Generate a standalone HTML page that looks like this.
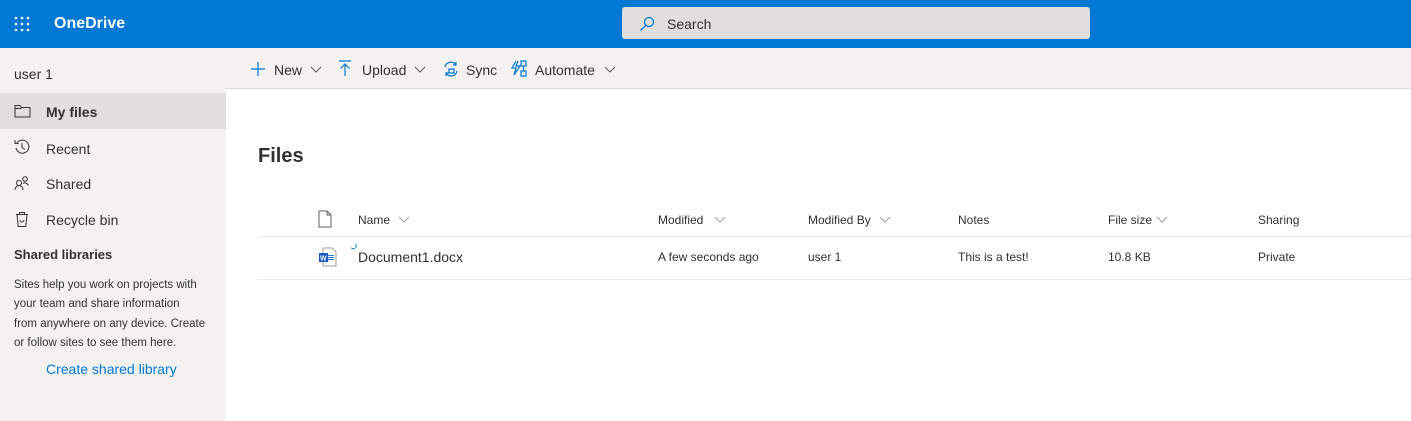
<!DOCTYPE html>
<html><head><meta charset="utf-8"><style>
*{margin:0;padding:0;box-sizing:border-box}
body{width:1411px;height:421px;overflow:hidden;font-family:"Liberation Sans",sans-serif;background:#faf9f8;position:relative;color:#323130}
.top{position:absolute;left:0;top:0;width:1411px;height:48px;background:#0078d4}
.brand{position:absolute;left:54px;top:15px;color:#fff;font-size:16px;font-weight:bold}
.search{position:absolute;left:622px;top:7px;width:468px;height:32px;background:#e1dfdd;border-radius:3px;font-size:14px;color:#323130}
.side{position:absolute;left:0;top:48px;width:226px;height:373px;background:#f3f2f1}
.tb{position:absolute;left:226px;top:48px;width:1185px;height:41px;background:#f3f2f1;border-bottom:1px solid #e1dfdd}
.main{position:absolute;left:226px;top:90px;width:1185px;height:331px;background:#fff}
.a{position:absolute;white-space:nowrap}
.nav{font-size:14px}
.hd{font-size:12px;color:#323130}
.cell{font-size:12px;color:#323130}
svg{position:absolute}
</style></head><body>
<div class="top">
<svg style="left:14px;top:16px" width="16" height="16" viewBox="0 0 16 16" fill="#fff"><circle cx="2" cy="2" r="1.3"/><circle cx="8" cy="2" r="1.3"/><circle cx="14" cy="2" r="1.3"/><circle cx="2" cy="8" r="1.3"/><circle cx="8" cy="8" r="1.3"/><circle cx="14" cy="8" r="1.3"/><circle cx="2" cy="14" r="1.3"/><circle cx="8" cy="14" r="1.3"/><circle cx="14" cy="14" r="1.3"/></svg>
<div class="brand">OneDrive</div>
<div class="search"><svg style="left:17px;top:9px" width="16" height="16" viewBox="0 0 16 16" fill="none" stroke="#0078d4" stroke-width="1.3"><circle cx="10" cy="6" r="4.5"/><path d="M6.8 9.2L1.5 14.5"/></svg><span class="a" style="left:45px;top:9px">Search</span></div>
</div>
<div class="side">
<div class="a nav" style="left:14px;top:18px">user 1</div>
<div style="position:absolute;left:0;top:45px;width:226px;height:36px;background:#e1dfdd"></div>
<svg style="left:14px;top:56px" width="17" height="14" viewBox="0 0 17 14" fill="none" stroke="#323130"><path d="M1 1.5h5l1.5 2H16v9.5H1z M1 4.5h6.5"/></svg>
<div class="a nav" style="left:46px;top:56px;font-weight:bold">My files</div>
<svg style="left:14px;top:91px" width="16" height="16" viewBox="0 0 16 16" fill="none" stroke="#323130"><path d="M3 4A6.5 6.5 0 1 1 2 9M1 1v3.5h3.5M8 4v4.5l3 2"/></svg>
<div class="a nav" style="left:46px;top:93px">Recent</div>
<svg style="left:14px;top:127px" width="16" height="16" viewBox="0 0 16 16" fill="none" stroke="#323130"><circle cx="5" cy="8" r="2.5"/><path d="M1 15c0-3 2-4.5 4-4.5s4 1.5 4 4.5"/><circle cx="11" cy="4" r="2.3"/><path d="M9 8.5c1-1 4-1 5.5 2"/></svg>
<div class="a nav" style="left:46px;top:128px">Shared</div>
<svg style="left:14px;top:163px" width="16" height="17" viewBox="0 0 16 17" fill="none" stroke="#323130"><path d="M2 3.5h12M3 3.5l1.2 12h7.6L13 3.5M5.5 3.5V1.5h5v2M6 9a2 2 0 1 0 4 0"/></svg>
<div class="a nav" style="left:46px;top:164px">Recycle bin</div>
<div class="a" style="left:14px;top:199px;font-size:13px;font-weight:bold">Shared libraries</div>
<div class="a" style="left:14px;top:228px;font-size:11.5px;line-height:19.3px">Sites help you work on projects with<br>your team and share information<br>from anywhere on any device. Create<br>or follow sites to see them here.</div>
<div class="a" style="left:46px;top:313px;font-size:14px;color:#0078d4">Create shared library</div>
</div>
<div class="tb">
<svg style="left:24px;top:13px" width="16" height="16" viewBox="0 0 16 16" stroke="#0078d4" stroke-width="1.2"><path d="M8 1v14M1 8h14"/></svg>
<div class="a nav" style="left:48px;top:14px">New</div>
<svg style="left:84px;top:18px" width="12" height="7" viewBox="0 0 12 7" fill="none" stroke="#605e5c"><path d="M1 1l5 5 5-5"/></svg>
<svg style="left:112px;top:12px" width="14" height="17" viewBox="0 0 14 17" fill="none" stroke="#0078d4" stroke-width="1.2"><path d="M1 1h12M7 16V4M2.5 8.5L7 4l4.5 4.5"/></svg>
<div class="a nav" style="left:136px;top:14px">Upload</div>
<svg style="left:188px;top:18px" width="12" height="7" viewBox="0 0 12 7" fill="none" stroke="#605e5c"><path d="M1 1l5 5 5-5"/></svg>
<svg style="left:216px;top:12px" width="18" height="18" viewBox="0 0 18 18" fill="none" stroke="#0078d4" stroke-width="1.2"><path d="M3 7a6 6 0 0 1 11-2M14 2v3h-3M15 11a6 6 0 0 1-11 2M4 16v-3h3M7 9h5v4H7z"/></svg>
<div class="a nav" style="left:240px;top:14px">Sync</div>
<svg style="left:284px;top:12px" width="18" height="18" viewBox="0 0 18 18" fill="none" stroke="#0078d4" stroke-width="1.2"><path d="M6 1L2 8h4l-2 7 6-9H6l2-5M11 1h5v5h-5zM11 11h5v5h-5zM13.5 6v5"/></svg>
<div class="a nav" style="left:309px;top:14px">Automate</div>
<svg style="left:378px;top:18px" width="12" height="7" viewBox="0 0 12 7" fill="none" stroke="#605e5c"><path d="M1 1l5 5 5-5"/></svg>
</div>
<div class="main">
<div class="a" style="left:32px;top:55px;font-size:20px;font-weight:bold;color:#323130">Files</div>
<svg style="left:92px;top:120px" width="14" height="18" viewBox="0 0 14 18" fill="#fff" stroke="#605e5c"><path d="M1 1h8l4 4v12H1z M9 1v4h4"/></svg>
<div class="a hd" style="left:132px;top:123px">Name</div>
<svg style="left:172px;top:126px" width="12" height="7" viewBox="0 0 12 7" fill="none" stroke="#a19f9d"><path d="M1 1l5 5 5-5"/></svg>
<div class="a hd" style="left:432px;top:123px">Modified</div>
<svg style="left:488px;top:126px" width="12" height="7" viewBox="0 0 12 7" fill="none" stroke="#a19f9d"><path d="M1 1l5 5 5-5"/></svg>
<div class="a hd" style="left:582px;top:123px">Modified By</div>
<svg style="left:653px;top:126px" width="12" height="7" viewBox="0 0 12 7" fill="none" stroke="#a19f9d"><path d="M1 1l5 5 5-5"/></svg>
<div class="a hd" style="left:732px;top:123px">Notes</div>
<div class="a hd" style="left:882px;top:123px">File size</div>
<svg style="left:930px;top:126px" width="12" height="7" viewBox="0 0 12 7" fill="none" stroke="#a19f9d"><path d="M1 1l5 5 5-5"/></svg>
<div class="a hd" style="left:1032px;top:123px">Sharing</div>
<div style="position:absolute;left:31px;top:146px;width:1154px;height:1px;background:#edebe9"></div>
<svg style="left:92px;top:157px" width="20" height="20" viewBox="0 0 20 20"><path d="M5 1h9l4 4v14H5z" fill="#fff" stroke="#a19f9d"/><rect x="9" y="8" width="7" height="1" fill="#2b7cd3"/><rect x="9" y="10" width="7" height="1" fill="#2b7cd3"/><rect x="9" y="12" width="7" height="1" fill="#2b7cd3"/><rect x="1" y="6" width="9" height="9" fill="#185abd"/><text x="2" y="13.5" font-size="7" font-weight="bold" fill="#fff" font-family="Liberation Sans">W</text></svg>
<svg style="left:124px;top:154px" width="10" height="8" viewBox="0 0 10 8" stroke="#0078d4"><path d="M1 4l4 1M6 0v4"/></svg>
<div class="a" style="left:132px;top:159px;font-size:14px">Document1.docx</div>
<div class="a cell" style="left:432px;top:160px">A few seconds ago</div>
<div class="a cell" style="left:582px;top:160px">user 1</div>
<div class="a cell" style="left:732px;top:160px">This is a test!</div>
<div class="a cell" style="left:882px;top:160px">10.8 KB</div>
<div class="a cell" style="left:1032px;top:160px">Private</div>
<div style="position:absolute;left:31px;top:189px;width:1154px;height:1px;background:#edebe9"></div>
</div>
</body></html>
